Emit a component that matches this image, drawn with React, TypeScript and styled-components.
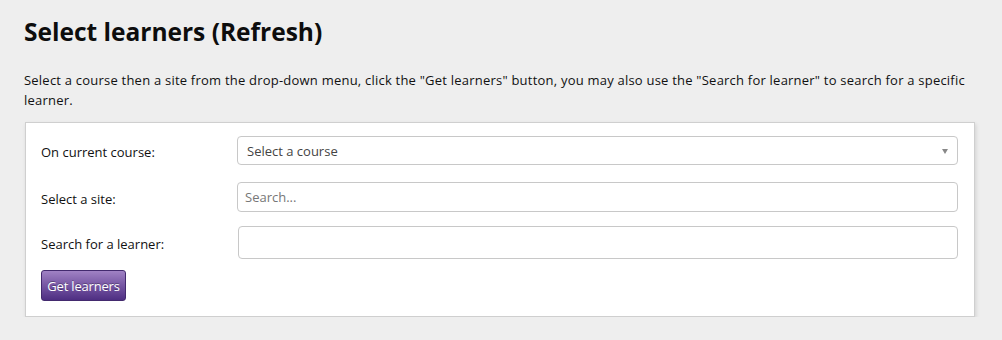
import React from 'react'
import styled, { createGlobalStyle } from 'styled-components'

const GlobalStyle = createGlobalStyle`
  html, body {
    margin: 0;
    padding: 0;
    background: #eeeeee;
  }
  body {
    font-family: 'Open Sans', 'Noto Sans', Arial, sans-serif;
    color: #111;
  }
`

const Page = styled.div`
  padding: 14px 27px 0 24px;
`

const Title = styled.h1`
  margin: 0;
  font-size: 24.5px;
  line-height: 36px;
  font-weight: 700;
  color: #0d0d0d;
`

const Intro = styled.p`
  margin: 20px 0 12px 0;
  font-size: 13px;
  line-height: 20px;
  letter-spacing: 0.22px;
  color: #111;
`

const Card = styled.div`
  margin-left: 1px;
  background: #fff;
  border: 1px solid #cfcfcf;
  box-shadow: 1px 2px 4px rgba(0, 0, 0, 0.12);
  padding: 13px 16px 15px 15px;
`

const FormRow = styled.div<{ gap: number }>`
  display: grid;
  grid-template-columns: 196px 1fr;
  align-items: center;
  margin-bottom: ${({ gap }) => gap}px;
`

const Label = styled.label`
  font-size: 13px;
  color: #111;
  padding-top: 3px;
`

const Field = styled.div<{ h: number; offset?: number }>`
  position: relative;
  height: ${({ h }) => h}px;
  margin-left: ${({ offset }) => offset || 0}px;
  border: 1px solid #c8c8c8;
  border-radius: 4px;
  background: #fff;
  box-sizing: border-box;
  display: flex;
  align-items: center;
  padding: 0 9px;
  font-size: 13px;
`

const SelectText = styled.span`
  color: #444;
`

const Placeholder = styled.span`
  color: #777;
  margin-left: -2px;
`

const Caret = styled.span`
  position: absolute;
  right: 9px;
  top: 50%;
  margin-top: -2px;
  width: 0;
  height: 0;
  border-left: 3.5px solid transparent;
  border-right: 3.5px solid transparent;
  border-top: 5px solid #888;
`

const Button = styled.button`
  display: block;
  width: 85px;
  height: 31px;
  border: 1px solid #432a6e;
  border-radius: 3px;
  background: linear-gradient(to bottom, #a082c4 0%, #7a5aa6 45%, #4e2e82 100%);
  color: #fff;
  font-family: 'Open Sans', 'Noto Sans', Arial, sans-serif;
  font-size: 13px;
  padding: 0;
  letter-spacing: -0.2px;
  text-shadow: 0 -1px 0 rgba(0, 0, 0, 0.3);
`

export default function App() {
  return (
    <>
      <GlobalStyle />
      <Page>
        <Title>Select learners (Refresh)</Title>
        <Intro>
          Select a course then a site from the drop-down menu, click the "Get learners" button, you may also use the
          "Search for learner" to search for a specific learner.
        </Intro>
        <Card>
          <FormRow gap={17}>
            <Label>On current course:</Label>
            <Field h={29}>
              <SelectText>Select a course</SelectText>
              <Caret />
            </Field>
          </FormRow>
          <FormRow gap={14}>
            <Label>Select a site:</Label>
            <Field h={30}>
              <Placeholder>Search...</Placeholder>
            </Field>
          </FormRow>
          <FormRow gap={11}>
            <Label>Search for a learner:</Label>
            <Field h={33} offset={1} />
          </FormRow>
          <Button>Get learners</Button>
        </Card>
      </Page>
    </>
  )
}
